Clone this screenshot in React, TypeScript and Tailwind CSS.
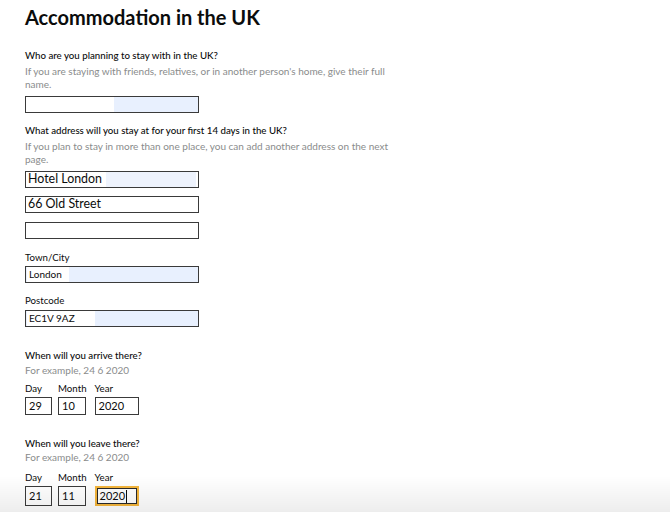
import React from "react";

const base = "font-['Lato','Noto_Sans',sans-serif]";
const inputFont = "font-['Lato','Liberation_Sans',sans-serif]";

function Label({ children, className = "" }: { children: React.ReactNode; className?: string }) {
  return (
    <div className={`text-[9.7px] leading-[14px] text-[#0b0c0c] font-medium ${className}`}>{children}</div>
  );
}

function Hint({ children, className = "" }: { children: React.ReactNode; className?: string }) {
  return <div className={`text-[10px] leading-[13px] text-[#8a8c8c] ${className}`}>{children}</div>;
}

function DateBox({ w, h, value, focus = false }: { w: string; h: string; value: string; focus?: boolean }) {
  return (
    <div
      className={`${w} ${h} ${
        focus ? "border-2 border-[#f5b63c] shadow-[inset_0_0_0_1px_#2a2a2a]" : "border border-[#3a3a3a]"
      } flex items-center pl-[3px] text-[11px] ${inputFont} text-[#0b0c0c] bg-white`}
    >
      {value}
      {focus && <span className="ml-[1px] inline-block w-[1px] h-[13px] bg-[#0b0c0c]" />}
    </div>
  );
}

function DateGroup({ day, month, year, h, focus = false }: { day: string; month: string; year: string; h: string; focus?: boolean }) {
  return (
    <div className="flex">
      <div className="flex flex-col">
        <Label className="font-normal">Day</Label>
        <div className="mt-[2px]">
          <DateBox w="w-[27px]" h={h} value={day} />
        </div>
      </div>
      <div className="flex flex-col ml-[6px]">
        <Label className="font-normal">Month</Label>
        <div className="mt-[2px]">
          <DateBox w="w-[28px]" h={h} value={month} />
        </div>
      </div>
      <div className="flex flex-col ml-[8px]">
        <Label className="font-normal">Year</Label>
        <div className="mt-[2px]">
          <DateBox w="w-[44px]" h={h} value={year} focus={focus} />
        </div>
      </div>
    </div>
  );
}

export default function App() {
  return (
    <div className={`relative w-[670px] h-[512px] overflow-hidden bg-white ${base}`}>
      <div className="px-[25px]">
        <h1 className="pt-[3px] text-[20px] leading-[28px] font-bold text-[#0b0c0c]">Accommodation in the UK</h1>

        <Label className="mt-[17px]">Who are you planning to stay with in the UK?</Label>
        <Hint className="mt-[3px] w-[368px]">
          If you are staying with friends, relatives, or in another person's home, give their full name.
        </Hint>
        <div className="mt-[5px] w-[174px] h-[17px] border border-[#3a3a3a] flex">
          <div className="w-[88px] bg-white" />
          <div className="flex-1 bg-[#e8f0fe]" />
        </div>

        <Label className="mt-[10px]">What address will you stay at for your first 14 days in the UK?</Label>
        <Hint className="mt-[3px] w-[372px]">
          If you plan to stay in more than one place, you can add another address on the next page.
        </Hint>
        <div className={`mt-[5px] w-[174px] h-[17px] border border-[#3a3a3a] flex items-center relative bg-white`}>
          <div className="absolute right-[2px] top-0 bottom-0 w-[90px] bg-[#eef3fd]" />
          <span className={`relative pl-[2px] text-[12.4px] ${inputFont} text-[#0b0c0c]`}>Hotel London</span>
        </div>
        <div className={`mt-[8px] w-[174px] h-[17px] border border-[#3a3a3a] flex items-center bg-white`}>
          <span className={`pl-[2px] text-[12.4px] ${inputFont} text-[#0b0c0c]`}>66 Old Street</span>
        </div>
        <div className="mt-[9px] w-[174px] h-[17px] border border-[#3a3a3a] bg-white" />

        <Label className="mt-[11px] font-normal">Town/City</Label>
        <div className="mt-[2px] w-[174px] h-[17px] border border-[#3a3a3a] flex items-center bg-[#e8f0fe]">
          <span className={`ml-[1px] pl-[2px] pr-[7px] bg-white leading-[15px] text-[10px] ${inputFont} text-[#0b0c0c]`}>London</span>
        </div>

        <Label className="mt-[10px] font-normal">Postcode</Label>
        <div className="mt-[3px] w-[174px] h-[17px] border border-[#3a3a3a] flex items-center bg-[#e8f0fe]">
          <span className={`ml-[1px] pl-[2px] pr-[20px] bg-white leading-[15px] text-[10px] ${inputFont} text-[#0b0c0c]`}>EC1V 9AZ</span>
        </div>

        <Label className="mt-[21px]">When will you arrive there?</Label>
        <Hint className="mt-[2px]">For example, 24 6 2020</Hint>
        <div className="mt-[4px]">
          <DateGroup day="29" month="10" year="2020" h="h-[18px]" />
        </div>

        <Label className="mt-[21px]">When will you leave there?</Label>
        <Hint className="mt-[1px]">For example, 24 6 2020</Hint>
        <div className="mt-[6px]">
          <DateGroup day="21" month="11" year="2020" h="h-[20px]" focus />
        </div>
      </div>
      <div className="pointer-events-none absolute left-0 right-0 bottom-0 h-[36px] bg-gradient-to-b from-transparent to-[#00000012]" />
    </div>
  );
}
